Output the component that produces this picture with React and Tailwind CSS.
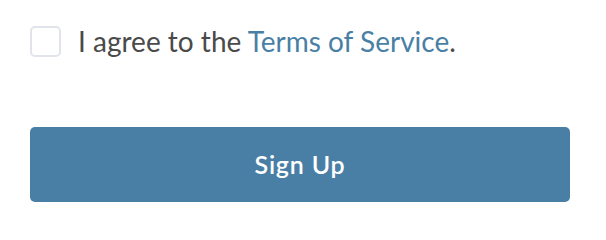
export default function App() {
  return (
    <div className="w-[606px] h-[240px] bg-white px-[30px] pt-[26px]" style={{ fontFamily: '"Source Sans Pro", Lato, "Noto Sans", sans-serif' }}>
      <label className="flex items-center gap-[17px]">
        <span className="w-[31px] h-[31px] rounded-[5px] border-2 border-[#e1e5eb] bg-white shrink-0" />
        <span className="text-[28px] leading-[31px] text-[#4a4a4a]">
          I agree to the <a className="text-[#4a7fa5]">Terms of Service</a>.
        </span>
      </label>
      <button className="mt-[70px] w-[540px] h-[75px] rounded-[5px] bg-[#4a7fa5] text-white text-[25px] font-semibold tracking-[0.8px]">
        Sign Up
      </button>
    </div>
  );
}
